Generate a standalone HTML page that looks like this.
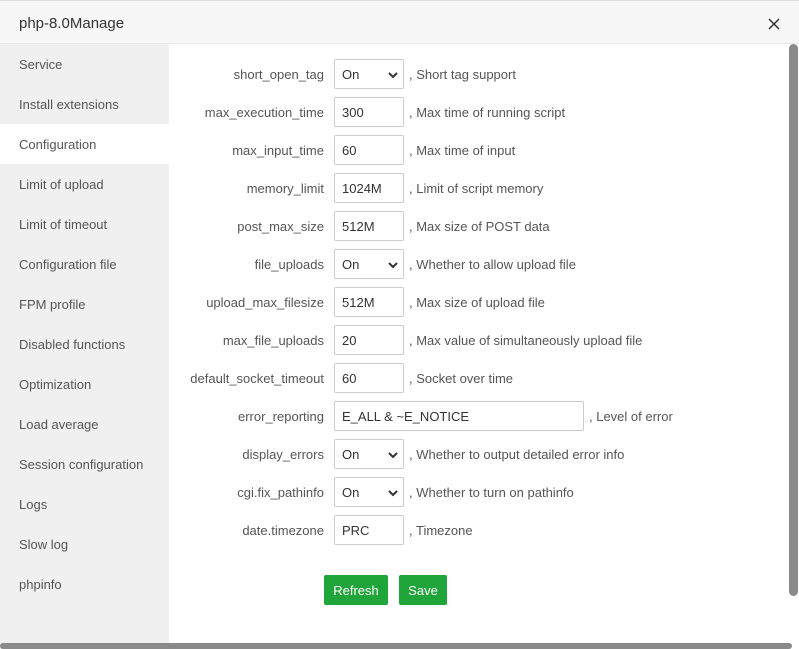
<!DOCTYPE html>
<html><head><meta charset="utf-8"><style>
*{box-sizing:border-box;margin:0;padding:0}
body{width:799px;height:649px;overflow:hidden;background:#fff;font-family:"Liberation Sans",sans-serif;font-size:13px;color:#333;position:relative}
.hdr{position:absolute;left:0;top:0;width:799px;height:44px;background:#f7f7f7;border-top:1px solid #ddd;border-bottom:1px solid #e8e8e8}
.hdr .t{position:absolute;left:19px;top:14px;font-size:15px;color:#333}
.hdr svg{position:absolute;left:768px;top:17px}
.side{position:absolute;left:0;top:44px;width:169px;height:605px;background:#f0f0f0}
.side div{height:40px;line-height:42px;padding-left:19px;color:#555}
.side div.a{background:#fff}
.row{position:absolute;left:169px;height:30px;width:600px}
.lab{position:absolute;right:445px;top:8px;white-space:nowrap;color:#555;text-align:right}
.in{position:absolute;left:165px;top:0;width:70px;height:30px;border:1px solid #ccc;border-radius:2px;padding-left:7px;line-height:30px;color:#333;background:#fff}
.in.w{width:250px}
.in svg{position:absolute;right:5px;top:11px}
.d{position:absolute;top:8px;left:240px;white-space:nowrap;color:#555}
.d.w{left:420px}
.btn{position:absolute;top:575px;height:30px;background:#20a53a;color:#fff;border-radius:2px;line-height:31px;text-align:center;font-size:13px}
.vs{position:absolute;left:789px;top:44px;width:9px;height:552px;background:#8a8a8a;border-radius:5px}
.hs{position:absolute;left:0;top:643px;width:792px;height:6px;background:#8a8a8a;border-radius:3px}
</style></head><body>
<div class="hdr"><span class="t">php-8.0Manage</span><svg width="12" height="12" viewBox="0 0 12 12"><path d="M1 1L11 11M11 1L1 11" stroke="#333" stroke-width="1.5"/></svg></div>
<div class="side">
<div>Service</div><div>Install extensions</div><div class="a">Configuration</div><div>Limit of upload</div><div>Limit of timeout</div><div>Configuration file</div><div>FPM profile</div><div>Disabled functions</div><div>Optimization</div><div>Load average</div><div>Session configuration</div><div>Logs</div><div>Slow log</div><div>phpinfo</div>
</div>
<div class="row" style="top:59px"><span class="lab">short_open_tag</span><div class="in">On<svg width="10" height="8" viewBox="0 0 10 8"><path d="M1 2l4 4 4-4" stroke="#333" stroke-width="2" fill="none"/></svg></div><span class="d">, Short tag support</span></div>
<div class="row" style="top:97px"><span class="lab">max_execution_time</span><div class="in">300</div><span class="d">, Max time of running script</span></div>
<div class="row" style="top:135px"><span class="lab">max_input_time</span><div class="in">60</div><span class="d">, Max time of input</span></div>
<div class="row" style="top:173px"><span class="lab">memory_limit</span><div class="in">1024M</div><span class="d">, Limit of script memory</span></div>
<div class="row" style="top:211px"><span class="lab">post_max_size</span><div class="in">512M</div><span class="d">, Max size of POST data</span></div>
<div class="row" style="top:249px"><span class="lab">file_uploads</span><div class="in">On<svg width="10" height="8" viewBox="0 0 10 8"><path d="M1 2l4 4 4-4" stroke="#333" stroke-width="2" fill="none"/></svg></div><span class="d">, Whether to allow upload file</span></div>
<div class="row" style="top:287px"><span class="lab">upload_max_filesize</span><div class="in">512M</div><span class="d">, Max size of upload file</span></div>
<div class="row" style="top:325px"><span class="lab">max_file_uploads</span><div class="in">20</div><span class="d">, Max value of simultaneously upload file</span></div>
<div class="row" style="top:363px"><span class="lab">default_socket_timeout</span><div class="in">60</div><span class="d">, Socket over time</span></div>
<div class="row" style="top:401px"><span class="lab">error_reporting</span><div class="in w">E_ALL &amp; ~E_NOTICE</div><span class="d w">, Level of error</span></div>
<div class="row" style="top:439px"><span class="lab">display_errors</span><div class="in">On<svg width="10" height="8" viewBox="0 0 10 8"><path d="M1 2l4 4 4-4" stroke="#333" stroke-width="2" fill="none"/></svg></div><span class="d">, Whether to output detailed error info</span></div>
<div class="row" style="top:477px"><span class="lab">cgi.fix_pathinfo</span><div class="in">On<svg width="10" height="8" viewBox="0 0 10 8"><path d="M1 2l4 4 4-4" stroke="#333" stroke-width="2" fill="none"/></svg></div><span class="d">, Whether to turn on pathinfo</span></div>
<div class="row" style="top:515px"><span class="lab">date.timezone</span><div class="in">PRC</div><span class="d">, Timezone</span></div>
<div class="btn" style="left:324px;width:64px">Refresh</div>
<div class="btn" style="left:399px;width:48px">Save</div>
<div class="vs"></div>
<div class="hs"></div>
</body></html>
